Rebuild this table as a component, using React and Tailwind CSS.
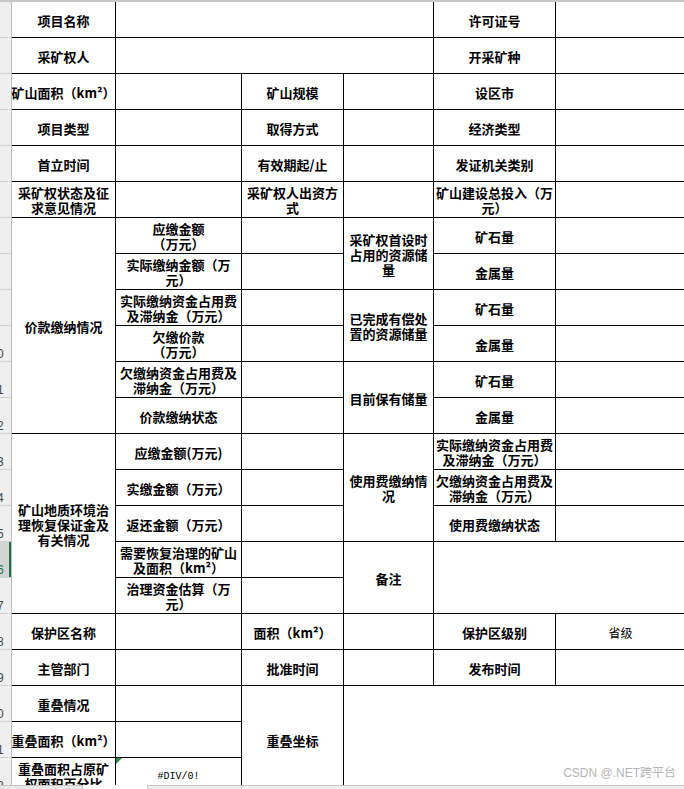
import React from "react";

// sheet rows are 36px tall; cells placed by explicit grid start/span classes
const cells = [
  // row 1-2
  { pos: "col-start-1 row-start-1", t: ["项目名称"] },
  { pos: "col-start-2 col-span-3 row-start-1" },
  { pos: "col-start-5 row-start-1", t: ["许可证号"] },
  { pos: "col-start-6 row-start-1" },
  { pos: "col-start-1 row-start-2", t: ["采矿权人"] },
  { pos: "col-start-2 col-span-3 row-start-2" },
  { pos: "col-start-5 row-start-2", t: ["开采矿种"] },
  { pos: "col-start-6 row-start-2" },
  // row 3-6
  { pos: "col-start-1 row-start-3", t: ["矿山面积（km²）"] },
  { pos: "col-start-2 row-start-3" },
  { pos: "col-start-3 row-start-3", t: ["矿山规模"] },
  { pos: "col-start-4 row-start-3" },
  { pos: "col-start-5 row-start-3", t: ["设区市"] },
  { pos: "col-start-6 row-start-3" },
  { pos: "col-start-1 row-start-4", t: ["项目类型"] },
  { pos: "col-start-2 row-start-4" },
  { pos: "col-start-3 row-start-4", t: ["取得方式"] },
  { pos: "col-start-4 row-start-4" },
  { pos: "col-start-5 row-start-4", t: ["经济类型"] },
  { pos: "col-start-6 row-start-4" },
  { pos: "col-start-1 row-start-5", t: ["首立时间"] },
  { pos: "col-start-2 row-start-5" },
  { pos: "col-start-3 row-start-5", t: ["有效期起/止"] },
  { pos: "col-start-4 row-start-5" },
  { pos: "col-start-5 row-start-5", t: ["发证机关类别"] },
  { pos: "col-start-6 row-start-5" },
  { pos: "col-start-1 row-start-6", t: ["采矿权状态及征", "求意见情况"] },
  { pos: "col-start-2 row-start-6" },
  { pos: "col-start-3 row-start-6", t: ["采矿权人出资方", "式"] },
  { pos: "col-start-4 row-start-6" },
  { pos: "col-start-5 row-start-6", t: ["矿山建设总投入（万", "元）"] },
  { pos: "col-start-6 row-start-6" },
  // 价款 block rows 7-12
  { pos: "col-start-1 row-start-7 row-span-6", t: ["价款缴纳情况"] },
  { pos: "col-start-2 row-start-7", t: ["应缴金额", "（万元）"] },
  { pos: "col-start-3 row-start-7" },
  { pos: "col-start-4 row-start-7 row-span-2", t: ["采矿权首设时", "占用的资源储", "量"] },
  { pos: "col-start-5 row-start-7", t: ["矿石量"] },
  { pos: "col-start-6 row-start-7" },
  { pos: "col-start-2 row-start-8", t: ["实际缴纳金额（万", "元）"] },
  { pos: "col-start-3 row-start-8" },
  { pos: "col-start-5 row-start-8", t: ["金属量"] },
  { pos: "col-start-6 row-start-8" },
  { pos: "col-start-2 row-start-9", t: ["实际缴纳资金占用费", "及滞纳金（万元）"] },
  { pos: "col-start-3 row-start-9" },
  { pos: "col-start-4 row-start-9 row-span-2", t: ["已完成有偿处", "置的资源储量"] },
  { pos: "col-start-5 row-start-9", t: ["矿石量"] },
  { pos: "col-start-6 row-start-9" },
  { pos: "col-start-2 row-start-10", t: ["欠缴价款", "（万元）"] },
  { pos: "col-start-3 row-start-10" },
  { pos: "col-start-5 row-start-10", t: ["金属量"] },
  { pos: "col-start-6 row-start-10" },
  { pos: "col-start-2 row-start-11", t: ["欠缴纳资金占用费及", "滞纳金（万元）"] },
  { pos: "col-start-3 row-start-11" },
  { pos: "col-start-4 row-start-11 row-span-2", t: ["目前保有储量"] },
  { pos: "col-start-5 row-start-11", t: ["矿石量"] },
  { pos: "col-start-6 row-start-11" },
  { pos: "col-start-2 row-start-12", t: ["价款缴纳状态"] },
  { pos: "col-start-3 row-start-12" },
  { pos: "col-start-5 row-start-12", t: ["金属量"] },
  { pos: "col-start-6 row-start-12" },
  // 保证金 block rows 13-17
  { pos: "col-start-1 row-start-13 row-span-5", t: ["矿山地质环境治", "理恢复保证金及", "有关情况"] },
  { pos: "col-start-2 row-start-13", t: ["应缴金额(万元)"] },
  { pos: "col-start-3 row-start-13" },
  { pos: "col-start-4 row-start-13 row-span-3", t: ["使用费缴纳情", "况"] },
  { pos: "col-start-5 row-start-13", t: ["实际缴纳资金占用费", "及滞纳金（万元）"] },
  { pos: "col-start-6 row-start-13" },
  { pos: "col-start-2 row-start-14", t: ["实缴金额（万元）"] },
  { pos: "col-start-3 row-start-14" },
  { pos: "col-start-5 row-start-14", t: ["欠缴纳资金占用费及", "滞纳金（万元）"] },
  { pos: "col-start-6 row-start-14" },
  { pos: "col-start-2 row-start-15", t: ["返还金额（万元）"] },
  { pos: "col-start-3 row-start-15" },
  { pos: "col-start-5 row-start-15", t: ["使用费缴纳状态"] },
  { pos: "col-start-6 row-start-15" },
  { pos: "col-start-2 row-start-16", t: ["需要恢复治理的矿山", "及面积（km²）"] },
  { pos: "col-start-3 row-start-16" },
  { pos: "col-start-4 row-start-16 row-span-2", t: ["备注"] },
  { pos: "col-start-5 col-span-2 row-start-16 row-span-2" },
  { pos: "col-start-2 row-start-17", t: ["治理资金估算（万", "元）"] },
  { pos: "col-start-3 row-start-17" },
  // 保护区 rows 18-19
  { pos: "col-start-1 row-start-18", t: ["保护区名称"] },
  { pos: "col-start-2 row-start-18" },
  { pos: "col-start-3 row-start-18", t: ["面积（km²）"] },
  { pos: "col-start-4 row-start-18" },
  { pos: "col-start-5 row-start-18", t: ["保护区级别"] },
  { pos: "col-start-6 row-start-18", t: ["省级"], plain: true },
  { pos: "col-start-1 row-start-19", t: ["主管部门"] },
  { pos: "col-start-2 row-start-19" },
  { pos: "col-start-3 row-start-19", t: ["批准时间"] },
  { pos: "col-start-4 row-start-19" },
  { pos: "col-start-5 row-start-19", t: ["发布时间"] },
  { pos: "col-start-6 row-start-19" },
  // 重叠 rows 20-22
  { pos: "col-start-1 row-start-20", t: ["重叠情况"] },
  { pos: "col-start-2 row-start-20" },
  { pos: "col-start-3 row-start-20 row-span-3", t: ["重叠坐标"] },
  { pos: "col-start-4 col-span-3 row-start-20 row-span-3" },
  { pos: "col-start-1 row-start-21", t: ["重叠面积（km²）"] },
  { pos: "col-start-2 row-start-21" },
  { pos: "col-start-1 row-start-22", t: ["重叠面积占原矿", "权面积百分比"] },
  { pos: "col-start-2 row-start-22", err: true },
];

const rowNums = Array.from({ length: 22 }, (_, i) => i + 1);

function Cell({ cell }) {
  return (
    <div
      className={`${cell.pos} relative flex flex-col items-center justify-center pt-[1px] border-r border-b border-black text-center leading-[15px] text-black`}
    >
      {cell.t &&
        cell.t.map((line, i) => (
          <span
            key={i}
            className={cell.plain ? "text-[12px] font-normal" : "text-[13px] font-bold whitespace-nowrap"}
          >
            {line}
          </span>
        ))}
      {cell.err && (
        <>
          <span className="absolute left-0 top-0 w-0 h-0 border-t-[6px] border-r-[6px] border-t-[#1e8c3a] border-r-transparent"></span>
          <span className="font-['Liberation_Mono',monospace] text-[10px] font-normal">#DIV/0!</span>
        </>
      )}
    </div>
  );
}

export default function App() {
  return (
    <div className="relative w-[684px] h-[789px] overflow-hidden bg-white font-['Noto_Sans_CJK_SC','Liberation_Sans',sans-serif]">
      <div className="flex w-[686px] border-t-2 border-[#c8c8c8]">
        {/* row header strip, mostly cut off */}
        <div className="w-[12px] shrink-0 flex flex-col border-r border-[#bdbdbd] bg-[#efefef]">
          {rowNums.map((n) => (
            <div
              key={n}
              className={`relative h-[36px] border-b border-[#d0d0d0] ${n === 16 ? "bg-[#d4d4d4] shadow-[inset_-2px_0_0_#217346]" : ""}`}
            >
              {n >= 10 && (
                <span
                  className={`absolute left-[-3px] bottom-[1px] text-[12px] leading-none font-['Liberation_Sans',sans-serif] ${n === 16 ? "text-[#217346]" : "text-[#444]"}`}
                >
                  {n % 10}
                </span>
              )}
            </div>
          ))}
        </div>

        <div className="grid grid-cols-[104px_126px_102px_90px_122px_130px] auto-rows-[36px]">
          {cells.map((c, i) => (
            <Cell key={i} cell={c} />
          ))}
        </div>
      </div>

      {/* watermark */}
      <div className="absolute right-[8px] bottom-[7px] text-[12px] text-[#b4b4b4] font-['Liberation_Sans','Noto_Sans_CJK_SC',sans-serif]">
        CSDN @.NET跨平台
      </div>

      {/* sheet bar at the bottom edge */}
      <div className="absolute left-0 right-0 bottom-0 h-[4px] flex">
        <div className="w-[83px] bg-[#e8e8e8] border-t border-r border-[#c6c6c6]"></div>
        <div className="w-[64px] bg-white"></div>
        <div className="flex-1 bg-[#f0f0f0] border-t border-l border-[#c6c6c6]"></div>
      </div>
    </div>
  );
}
